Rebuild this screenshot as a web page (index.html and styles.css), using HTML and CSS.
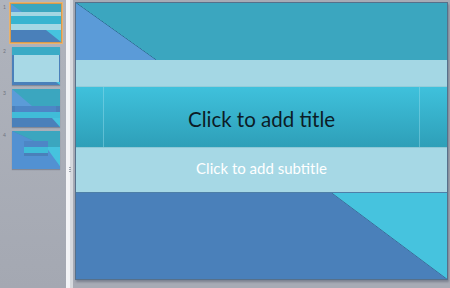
FILE: index.html
```html
<!DOCTYPE html>
<html>
<head>
<meta charset="utf-8">
<link rel="stylesheet" href="styles.css">
</head>
<body>
<div class="app">
  <aside class="thumbs">
    <div class="thumb-row">
      <span class="num">1</span>
      <div class="thumb selected">
        <svg viewBox="0 0 50 38" width="50" height="38" preserveAspectRatio="none">
          <rect width="50" height="38" fill="#4a80ba"/>
          <rect width="50" height="8" fill="#3ba6bf"/>
          <polygon points="0,0 0,8 11,8" fill="#5b9bd8"/>
          <rect y="8" width="50" height="4" fill="#a3d6e3"/>
          <rect y="12" width="50" height="8" fill="#38b4d0"/>
          <rect y="20" width="50" height="6" fill="#a5d7e4"/>
          <polygon points="35,26 50,26 50,38" fill="#46c3de"/>
        </svg>
      </div>
    </div>
    <div class="thumb-row">
      <span class="num">2</span>
      <div class="thumb">
        <svg viewBox="0 0 48 38" width="48" height="38" preserveAspectRatio="none">
          <rect width="48" height="38" fill="#4a80ba"/>
          <rect width="48" height="8" fill="#3aabc6"/>
          <rect x="2" y="8" width="45" height="27" fill="#a8d9e6"/>
          <polygon points="44,35 48,35 48,38" fill="#46c3de"/>
        </svg>
      </div>
    </div>
    <div class="thumb-row">
      <span class="num">3</span>
      <div class="thumb">
        <svg viewBox="0 0 48 38" width="48" height="38" preserveAspectRatio="none">
          <rect width="48" height="38" fill="#4a80ba"/>
          <rect width="48" height="17" fill="#3ba6bf"/>
          <polygon points="0,0 0,17 20,17" fill="#5b9bd8"/>
          <rect x="3" y="17" width="41" height="6" fill="#4d86c6"/>
          <rect y="23" width="48" height="6" fill="#40bcd8"/>
          <polygon points="40,29 48,29 48,38" fill="#46c3de"/>
        </svg>
      </div>
    </div>
    <div class="thumb-row">
      <span class="num">4</span>
      <div class="thumb">
        <svg viewBox="0 0 48 38" width="48" height="38" preserveAspectRatio="none">
          <rect width="48" height="38" fill="#4a80ba"/>
          <polygon points="0,0 48,0 48,22" fill="#3ba6bf"/>
          <polygon points="0,0 0,38 48,38 48,22" fill="#5291d2"/>
          <polygon points="34,16 48,16 48,38 50,38" fill="#46c3de"/>
          <rect x="12" y="10" width="24" height="6" fill="#4d86c6"/>
          <rect x="12" y="16" width="24" height="6" fill="#40bcd8"/>
          <rect x="12" y="22" width="24" height="3" fill="#4a80ba"/>
        </svg>
      </div>
    </div>
  </aside>
  <div class="splitter"><span class="grip"></span></div>
  <main class="stage">
    <div class="slide">
      <div class="band top"><div class="tri-top"></div></div>
      <div class="band light"></div>
      <div class="band title">
        <div class="title-inner">Click to add title</div>
      </div>
      <div class="band subtitle">
        <div class="subtitle-inner">Click to add subtitle</div>
      </div>
      <div class="band bottom"><div class="tri-bottom"></div></div>
    </div>
  </main>
</div>
</body>
</html>
```

FILE: styles.css
```css
* { box-sizing: border-box; }
html, body {
  margin: 0;
  padding: 0;
  width: 450px;
  height: 288px;
  overflow: hidden;
  background: #a7abb5;
  font-family: Lato, "Open Sans", sans-serif;
}
.app {
  display: flex;
  width: 450px;
  height: 288px;
}
.thumbs {
  width: 66px;
  flex: none;
  background: linear-gradient(to bottom, #b0b4bd, #a4a8b2);
  display: flex;
  flex-direction: column;
  padding-top: 3px;
  gap: 4px;
}
.thumb-row {
  display: flex;
  align-items: flex-start;
  height: 38px;
}
.num {
  width: 12px;
  font-size: 5px;
  color: #6f7480;
  padding-left: 3px;
  padding-top: 2px;
  line-height: 5px;
}
.thumb {
  width: 48px;
  height: 38px;
  box-shadow: 0 1px 1px rgba(60, 70, 90, 0.35);
}
.thumb svg { display: block; }
.thumb.selected {
  width: 52px;
  height: 40px;
  margin-left: -2px;
  margin-top: 0;
  border: 1px solid #d79a4e;
  box-shadow: 0 0 0 1px #e8b36e;
}
.thumb-row:first-child { height: 40px; }
.splitter {
  width: 7px;
  flex: none;
  background: linear-gradient(to right, #f2f3f6 0, #f2f3f6 4px, #d6d9de 4px, #d6d9de 7px);
  position: relative;
}
.grip {
  position: absolute;
  left: 3px;
  top: 167px;
  width: 2px;
  height: 6px;
  background: repeating-linear-gradient(to bottom, #9aa0aa 0 1px, transparent 1px 2px);
}
.stage {
  flex: 1;
  background: #a7abb5;
  padding: 2px 0 0 2px;
}
.slide {
  width: 373px;
  height: 278px;
  display: flex;
  flex-direction: column;
  border: 1px solid #56708a;
  box-shadow: 1px 2px 2px rgba(70, 80, 100, 0.45);
  overflow: hidden;
}
.band { flex: none; position: relative; }
.top {
  height: 57px;
  background: #3ba6bf;
}
.tri-top {
  width: 80px;
  height: 57px;
  background: linear-gradient(to bottom left, transparent calc(50% - 0.7px), #2f6d93 calc(50% - 0.3px), #5b9bd8 calc(50% + 0.5px));
}
.light {
  height: 27px;
  background: #a4d7e4;
  border-bottom: 1px solid #94ccd9;
}
.title {
  height: 60px;
  background: linear-gradient(to bottom, #3fc1dc, #2e9fb8);
  display: flex;
  align-items: center;
  justify-content: center;
  padding: 0 27px;
}
.title-inner {
  flex: 1;
  height: 100%;
  display: flex;
  align-items: center;
  justify-content: center;
  border-left: 1px solid rgba(150, 220, 235, 0.45);
  border-right: 1px solid rgba(150, 220, 235, 0.45);
  font-size: 20.5px;
  color: #0c1c26;
  padding-top: 4px;
}
.subtitle {
  height: 46px;
  background: #a6d8e5;
  display: flex;
  align-items: center;
  justify-content: center;
  padding: 0 56px;
  border-top: 1px solid #8ec8d6;
  border-bottom: 1px solid #4e7fa8;
}
.subtitle-inner {
  flex: 1;
  text-align: center;
  font-size: 15px;
  color: #ffffff;
  padding-bottom: 4px;
}
.bottom {
  flex: 1;
  background: #4a80ba;
  display: flex;
  justify-content: flex-end;
}
.tri-bottom {
  width: 115px;
  height: 100%;
  background: linear-gradient(to top right, transparent calc(50% - 0.6px), #3a6e98 calc(50% - 0.2px), #46c3de calc(50% + 0.6px));
}
```
